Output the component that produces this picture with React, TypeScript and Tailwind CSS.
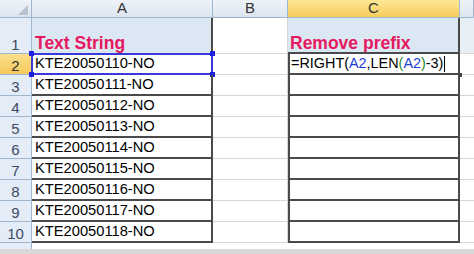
import React from "react";

const ROWS = [
  "KTE20050110-NO",
  "KTE20050111-NO",
  "KTE20050112-NO",
  "KTE20050113-NO",
  "KTE20050114-NO",
  "KTE20050115-NO",
  "KTE20050116-NO",
  "KTE20050117-NO",
  "KTE20050118-NO",
];

const FONT = { fontFamily: '"Liberation Sans", Arial, sans-serif' };

function ColHead({ label, active, w }: { label: string; active?: boolean; w: string }) {
  return (
    <div
      className={`${w} h-[18px] shrink-0 flex items-center justify-center border-r border-b border-[#9eb6ce] text-[15px] text-[#333] ${
        active
          ? "bg-gradient-to-b from-[#fde893] to-[#f6cb5c]"
          : "bg-gradient-to-b from-[#eef3f9] to-[#dce5ef]"
      }`}
    >
      {label}
    </div>
  );
}

function RowHead({ n, active, h, top }: { n: number; active?: boolean; h: string; top?: boolean }) {
  return (
    <div
      className={`w-[32px] ${h} shrink-0 overflow-hidden flex justify-center border-r border-[#9eb6ce] text-[15px] leading-none ${
        top ? "items-start pt-[3px]" : "items-end pb-[1px] border-b"
      } ${
        active
          ? "bg-gradient-to-b from-[#fbe08a] to-[#f5c95a] text-[#333]"
          : "bg-[#e4ecf7] text-[#3b4a63]"
      }`}
    >
      {n}
    </div>
  );
}

export default function App() {
  return (
    <div className="w-[474px] h-[254px] overflow-hidden bg-white flex flex-col" style={FONT}>
      {/* column headers */}
      <div className="flex">
        <div className="w-[32px] h-[18px] shrink-0 relative border-r border-b border-[#9eb6ce] bg-gradient-to-b from-[#eef3f9] to-[#dce5ef]">
          <svg className="absolute right-[3px] bottom-[2px]" width="10" height="10" viewBox="0 0 10 10">
            <polygon points="10,0 10,10 0,10" fill="#b7c3d3" />
          </svg>
        </div>
        <ColHead label="A" w="w-[181px]" />
        <ColHead label="B" w="w-[75px]" />
        <ColHead label="C" w="w-[172px]" active />
        <ColHead label="" w="flex-1" />
      </div>

      {/* row 1 */}
      <div className="flex">
        <RowHead n={1} h="h-[36px]" />
        <div className="w-[181px] h-[36px] shrink-0 flex items-end pl-[3px] pb-[2px] bg-[#dbe8f3] border-r-2 border-[#4a4a4a] text-[17.5px] font-bold leading-none text-[#e5195f]">
          Text String
        </div>
        <div className="w-[75px] h-[36px] shrink-0 border-r border-b border-[#d6d6d6]" />
        <div className="w-[172px] h-[36px] shrink-0 flex items-end pl-[2px] pb-[2px] bg-[#dbe8f3] border-r-2 border-[#4a4a4a] text-[17.5px] font-bold leading-none text-[#e5195f]">
          Remove prefix
        </div>
        <div className="flex-1 h-[36px] border-b border-[#d6d6d6] bg-[#e6eff6]" />
      </div>

      {/* data rows */}
      {ROWS.map((txt, i) => {
        const first = i === 0;
        return (
          <div key={txt} className="flex">
            <RowHead n={i + 2} h="h-[21px]" active={first} />
            <div className="w-[181px] h-[21px] shrink-0 relative flex items-center pl-[3px] border-r-2 border-b-2 border-[#4a4a4a] text-[14.7px] leading-none text-black">
              {txt}
              {first && (
                <>
                  <div className="absolute left-[-1px] top-[-1px] right-[-2px] bottom-[-2px] border-2 border-[#3a3ad6]" />
                  <div className="absolute left-[-3px] top-[-3px] w-[5px] h-[5px] bg-[#1f1fe0]" />
                  <div className="absolute right-[-4px] top-[-3px] w-[5px] h-[5px] bg-[#1f1fe0]" />
                  <div className="absolute left-[-3px] bottom-[-4px] w-[5px] h-[5px] bg-[#1f1fe0]" />
                  <div className="absolute right-[-4px] bottom-[-4px] w-[5px] h-[5px] bg-[#1f1fe0]" />
                </>
              )}
            </div>
            <div className="w-[75px] h-[21px] shrink-0 border-r border-b border-[#d6d6d6]" />
            <div
              className={`w-[172px] h-[21px] shrink-0 relative flex items-center pl-[1px] border-l-2 border-r-2 border-b-2 border-[#4a4a4a] text-[14.4px] leading-none text-black ${
                first ? "border-t-2 -mt-[2px] h-[23px]" : ""
              }`}
            >
              {first && (
                <>
                  <span>=RIGHT(</span>
                  <span className="text-[#1f3fd6]">A2</span>
                  <span>,LEN</span>
                  <span className="text-[#2a8a2a]">(</span>
                  <span className="text-[#1f3fd6]">A2</span>
                  <span className="text-[#2a8a2a]">)</span>
                  <span>-3)</span>
                  <span className="ml-[1px] w-[1px] h-[16px] bg-black" />
                  <div className="absolute right-[-4px] bottom-[-4px] w-[4px] h-[4px] bg-[#444]" />
                </>
              )}
            </div>
            <div className="flex-1 h-[21px] border-b border-[#d6d6d6]" />
          </div>
        );
      })}

      {/* row 11, cut off by the bottom edge */}
      <div className="flex">
        <RowHead n={11} h="h-[6px]" top />
        <div className="flex-1 h-[6px]" />
      </div>
      <div className="flex-1 bg-[#d9d9d9]" />
    </div>
  );
}
